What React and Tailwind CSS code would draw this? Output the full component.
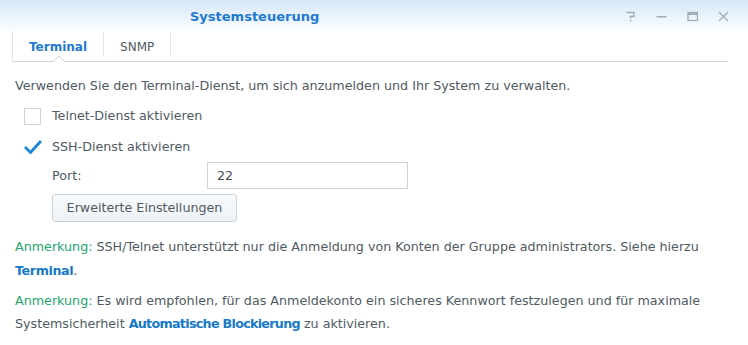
export default function App() {
  const font = { fontFamily: '"DejaVu Sans", Verdana, sans-serif' };
  return (
    <div className="w-[748px] h-[345px] bg-white overflow-hidden text-[#505a64] text-[12.7px]" style={font}>
      {/* title bar */}
      <div className="h-[31px] flex items-center bg-gradient-to-b from-[#d5e7f8] to-[#fcfdff]">
        <div className="pl-[190px] pt-[2px] text-[13px] font-bold text-[#1e7ad0]">Systemsteuerung</div>
        <div className="ml-auto flex items-center gap-[20px] pr-[19px] pt-[1px]">
          <svg width="11" height="11" viewBox="0 0 11 11" className="text-[#a3adb7]">
            <path d="M1.5 1.5 H9 V5.5 H5.5 V7.5" fill="none" stroke="currentColor" strokeWidth="1.4" />
            <rect x="4.8" y="8.8" width="1.5" height="1.6" fill="currentColor" />
          </svg>
          <svg width="11" height="11" viewBox="0 0 11 11" className="text-[#a3adb7]">
            <rect x="0.5" y="5" width="10" height="1.5" fill="currentColor" />
          </svg>
          <svg width="11" height="11" viewBox="0 0 11 11" className="text-[#a3adb7]">
            <rect x="1" y="1.5" width="9.5" height="8" fill="none" stroke="currentColor" strokeWidth="1.3" />
            <rect x="1" y="1.5" width="9.5" height="2.5" fill="currentColor" />
          </svg>
          <svg width="11" height="11" viewBox="0 0 11 11" className="text-[#a3adb7]">
            <path d="M1 1 L10 10 M10 1 L1 10" stroke="currentColor" strokeWidth="1.3" />
          </svg>
        </div>
      </div>

      {/* tabs */}
      <div className="ml-[12px] mr-[20px] h-[31px] flex border-l border-[#e3e6e9] relative">
        <div className="absolute left-0 right-0 bottom-0 h-px bg-[#d3d7db]" />
        <div className="px-[16px] flex items-center text-[12px] font-bold text-[#1e7ad0] relative">
          Terminal
          <svg width="12" height="7" viewBox="0 0 12 7" className="absolute left-[40px] bottom-0">
            <path d="M0 7 L6 1 L12 7" fill="white" stroke="#d3d7db" strokeWidth="1" />
          </svg>
        </div>
        <div className="w-px bg-[#e3e6e9] my-[1px] mb-[6px]" />
        <div className="px-[16px] flex items-center text-[12px] text-[#505a64]">SNMP</div>
        <div className="w-px bg-[#e3e6e9] my-[1px] mb-[6px]" />
      </div>

      {/* body */}
      <div className="px-[15px]">
        <div className="mt-[16px] h-[16px] leading-[16px]">
          Verwenden Sie den Terminal-Dienst, um sich anzumelden und Ihr System zu verwalten.
        </div>

        <div className="mt-[7px] flex items-center h-[30px] pl-[9px]">
          <div className="w-[17px] h-[17px] border border-[#cfd4d9] bg-white" />
          <span className="ml-[11px]">Telnet-Dienst aktivieren</span>
        </div>
        <div className="flex items-center h-[30px] pl-[9px] mt-[1px]">
          <svg width="18" height="17" viewBox="0 0 18 17">
            <path d="M2 9 L6.5 13.5 L16 3" fill="none" stroke="#1b86dc" strokeWidth="2.8" strokeLinecap="square" />
          </svg>
          <span className="ml-[10px]">SSH-Dienst aktivieren</span>
        </div>

        <div className="pl-[37px] mt-[0px]">
          <div className="flex items-center h-[27px]">
            <span className="w-[155px]">Port:</span>
            <div className="w-[201px] h-[27px] border border-[#cdd3d9] flex items-center pl-[9px] bg-white text-[#414b55]">22</div>
          </div>
          <button className="mt-[5px] h-[28px] w-[185px] rounded-[3px] border border-[#cbd2d9] bg-gradient-to-b from-[#f8fafc] to-[#edf2f6] text-[#505a64] text-[12.7px]" style={font}>
            Erweiterte Einstellungen
          </button>
        </div>

        <div className="mt-[13px] leading-[24px]">
          <span className="text-[#23a66b]">Anmerkung:</span> SSH/Telnet unterstützt nur die Anmeldung von Konten der Gruppe administrators. Siehe hierzu<br />
          <span className="font-bold text-[#1779c8] tracking-[-0.4px]">Terminal</span>.
        </div>
        <div className="mt-[6px] leading-[23px]">
          <span className="text-[#23a66b]">Anmerkung:</span> Es wird empfohlen, für das Anmeldekonto ein sicheres Kennwort festzulegen und für maximale<br />
          Systemsicherheit <span className="font-bold text-[#1779c8] tracking-[-0.7px]">Automatische Blockierung</span> zu aktivieren.
        </div>
      </div>
    </div>
  );
}
